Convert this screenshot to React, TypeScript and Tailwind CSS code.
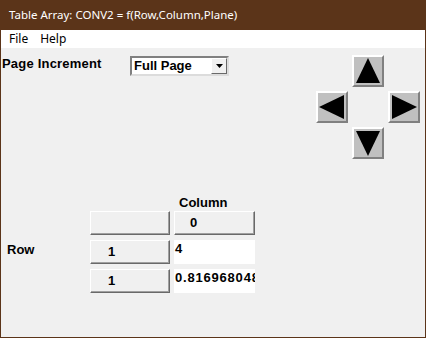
const ui = { fontFamily: '"Liberation Sans", Arial, sans-serif' };
const title = { fontFamily: '"Noto Sans", "Liberation Sans", sans-serif' };

const raised =
  'border border-t-white border-l-white border-r-[#696969] border-b-[#696969] shadow-[inset_-1px_-1px_0_#a0a0a0]';

function ArrowButton({ dir }: { dir: 'up' | 'down' | 'left' | 'right' }) {
  const points = {
    up: '16,3 28,28 4,28',
    down: '4,4 28,4 16,29',
    left: '3,16 28,4 28,28',
    right: '4,4 29,16 4,28',
  }[dir];
  return (
    <div className="w-[32px] h-[32px] bg-[#c0c0c0] border-2 border-t-white border-l-white border-r-[#808080] border-b-[#808080] flex items-center justify-center">
      <svg width="32" height="32" viewBox="0 0 32 32" className="shrink-0">
        <polygon points={points} fill="#000" />
      </svg>
    </div>
  );
}

function GridButton({ label, pad = 'pl-[17px]' }: { label?: string; pad?: string }) {
  return (
    <div className={`h-[24px] bg-[#f0f0f0] flex items-center text-[13px] font-bold ${pad} ${raised}`}>
      {label}
    </div>
  );
}

function Cell({ value }: { value: string }) {
  return (
    <div className="h-[24px] bg-white overflow-hidden whitespace-nowrap pl-[1px] pt-[1px] text-[13px] font-bold leading-[15px] tracking-[0.8px]">
      {value}
    </div>
  );
}

export default function App() {
  return (
    <div className="w-[426px] h-[338px] bg-[#5b3419] flex flex-col px-[1px] pb-[1px]" style={ui}>
      <div className="h-[30px] flex items-center pl-[8px] text-white text-[11.5px]" style={title}>
        Table Array: CONV2 = f(Row,Column,Plane)
      </div>
      <div className="h-[18px] bg-white flex items-center text-[12px] text-black" style={title}>
        <span className="ml-[8px]">File</span>
        <span className="ml-[12px]">Help</span>
      </div>
      <div className="flex-1 bg-[#f0f0f0] text-black flex flex-col">
        <div className="flex pt-[7px]">
          <div className="w-[129px] pl-[1px] pt-[1px] text-[13px] font-bold leading-[15px] tracking-[0.2px]">
            Page Increment
          </div>
          <div className="mt-[1px] w-[99px] h-[20px] bg-white border-2 border-t-[#808080] border-l-[#808080] border-r-[#dcdcdc] border-b-[#dcdcdc] flex items-center">
            <span className="flex-1 pl-[2px] text-[13px] font-bold">Full Page</span>
            <div className="w-[16px] h-[16px] bg-[#f0f0f0] border border-t-white border-l-white border-r-[#696969] border-b-[#696969] flex items-center justify-center">
              <svg width="7" height="4" viewBox="0 0 7 4">
                <polygon points="0,0 7,0 3.5,4" fill="#000" />
              </svg>
            </div>
          </div>
          <div className="ml-[87px] grid grid-cols-[32px_32px_32px] grid-rows-[32px_32px_32px] gap-x-[4px] gap-y-[4px]">
            <div />
            <ArrowButton dir="up" />
            <div />
            <ArrowButton dir="left" />
            <div />
            <ArrowButton dir="right" />
            <div />
            <ArrowButton dir="down" />
            <div />
          </div>
        </div>
        <div className="mt-[36px] pl-[178px] text-[13px] font-bold leading-[15px]">Column</div>
        <div className="mt-[1px] grid grid-cols-[85px_80px_81px] gap-x-[4px] gap-y-[5px]">
          <div />
          <GridButton />
          <GridButton label="0" pad="pl-[15px]" />
          <div className="pl-[6px] pt-[2px] text-[13px] font-bold leading-[15px]">Row</div>
          <GridButton label="1" />
          <Cell value="4" />
          <div />
          <GridButton label="1" />
          <Cell value="0.816968048" />
        </div>
      </div>
    </div>
  );
}
